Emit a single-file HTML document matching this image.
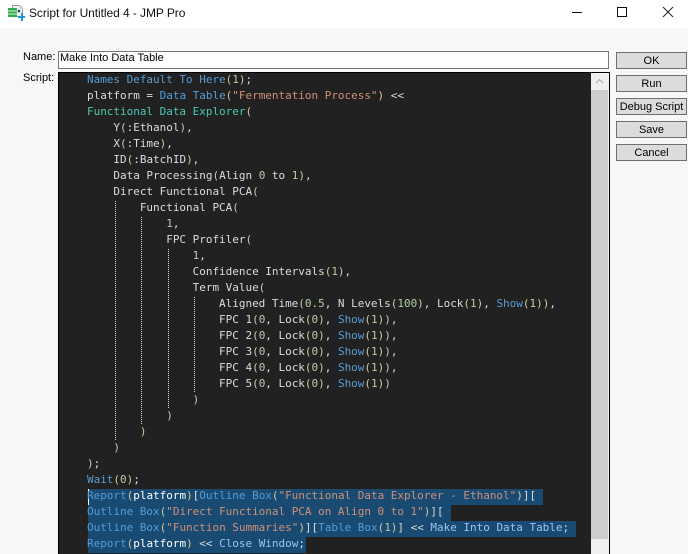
<!DOCTYPE html>
<html><head><meta charset="utf-8"><style>
html,body{margin:0;padding:0}
body{width:688px;height:554px;overflow:hidden;position:relative;background:#f7f7f7;font-family:"Liberation Sans",sans-serif;color:#000}
.a{position:absolute}
#tb{left:0;top:0;width:688px;height:28px;background:#fff}
.lbl{font-size:11px;line-height:14px}
.btn{position:absolute;left:616px;width:69px;height:15px;background:#dcdcdc;border:1px solid #707070;font-size:11px;line-height:17px;text-align:center}
#ed{left:59px;top:73px;width:532px;height:481px;background:#212121}
#sb{left:591px;top:73px;width:17px;height:466px;background:#cdcdcd}
#sbt{left:591px;top:73px;width:17px;height:17px;background:#f0f0f0}
.sel{position:absolute;background:#184a72;height:16px;left:88px}
.l{position:absolute;left:87px;font:11px/16px "DejaVu Sans Mono",monospace;letter-spacing:-0.02px;color:#dcdcdc;white-space:pre;height:16px}
.k{color:#569cd6}.f{color:#4ec9b0}.s{color:#ce9178}.n{color:#b5cea8}.b{color:#d4c89a}.w{color:#dcdcdc}
.g{position:absolute;width:0;border-left:1px dotted #d8d8d8}
</style></head><body>
<div class="a" id="tb"></div>
<svg class="a" style="left:8px;top:5px" width="17" height="17" viewBox="0 0 17 17"><path d="M4.500 .5h7l3 3v8h-10z" fill="#eef2f5" stroke="#8fa6b8"/><rect x="0" y="3" width="9" height="9" fill="#2fa84f"/><path d="M0 6h9M0 9h9" stroke="#d8f0dc"/><circle cx="11" cy="6" r="1.300" fill="#234"/><path d="M14 8v8M10 12h8" stroke="#1f94d2" stroke-width="2"/></svg>
<div class="a" style="left:29px;top:5px;font-size:12px;line-height:16px;white-space:pre;color:#111;letter-spacing:-0.07px">Script for Untitled 4 - JMP Pro</div>
<svg class="a" style="left:560px;top:0" width="128" height="28"><path d="M12 12.500h10" stroke="#111" fill="none"/><rect x="57.500" y="7.500" width="9" height="9" fill="none" stroke="#111"/><path d="M103 7l10 10M113 7l-10 10" stroke="#222" fill="none"/></svg>

<div class="a lbl" style="left:23px;top:50px">Name:</div>
<div class="a lbl" style="left:23px;top:71px">Script:</div>
<div class="a" style="left:58px;top:51px;height:16px;background:#fff;border:1px solid #777;font-size:11px;line-height:13px;padding-left:1px;width:548px">Make Into Data Table</div>

<div class="a" style="left:58px;top:72px;width:552px;height:482px;background:#f0f0f0;border:1px solid #000;border-bottom:0;box-sizing:border-box"></div>
<div class="a" id="ed"></div>
<div class="a" id="sb"></div>
<div class="a" id="sbt"></div>
<svg class="a" style="left:591px;top:73px" width="17" height="17"><path d="M5 10l3.500-3.500L12 10" fill="none" stroke="#b4b4b4" stroke-width="1.300"/></svg>

<div class="btn" style="top:52px">OK</div>
<div class="btn" style="top:75px">Run</div>
<div class="btn" style="top:98px">Debug Script</div>
<div class="btn" style="top:121px">Save</div>
<div class="btn" style="top:144px">Cancel</div>

<div class="sel" style="top:489px;width:455px"></div>
<div class="sel" style="top:505px;width:363px"></div>
<div class="sel" style="top:521px;width:488px"></div>
<div class="sel" style="top:537px;width:218px"></div>
<div class="a" style="left:88px;top:489px;width:1px;height:16px;background:#fff"></div>

<div class="g" style="left:115px;top:201px;height:239px"></div>
<div class="g" style="left:141px;top:217px;height:207px"></div>
<div class="g" style="left:168px;top:249px;height:159px"></div>
<div class="g" style="left:194px;top:297px;height:95px"></div>

<div class="l" style="top:72px"><span class="k">Names Default To Here</span><span class="b">(</span><span class="n">1</span><span class="b">)</span>;</div>
<div class="l" style="top:88px">platform = <span class="k">Data Table</span><span class="b">(</span><span class="s">"Fermentation Process"</span><span class="b">)</span> &lt;&lt;</div>
<div class="l" style="top:104px"><span class="f">Functional Data Explorer</span><span class="b">(</span></div>
<div class="l" style="top:120px">    Y<span class="b">(</span>:Ethanol<span class="b">)</span>,</div>
<div class="l" style="top:136px">    X<span class="b">(</span>:Time<span class="b">)</span>,</div>
<div class="l" style="top:152px">    ID<span class="b">(</span>:BatchID<span class="b">)</span>,</div>
<div class="l" style="top:168px">    Data Processing<span class="b">(</span>Align <span class="n">0</span> to <span class="n">1</span><span class="b">)</span>,</div>
<div class="l" style="top:184px">    Direct Functional PCA<span class="b">(</span></div>
<div class="l" style="top:200px">        Functional PCA<span class="b">(</span></div>
<div class="l" style="top:216px">            <span class="n">1</span>,</div>
<div class="l" style="top:232px">            FPC Profiler<span class="b">(</span></div>
<div class="l" style="top:248px">                <span class="n">1</span>,</div>
<div class="l" style="top:264px">                Confidence Intervals<span class="b">(</span><span class="n">1</span><span class="b">)</span>,</div>
<div class="l" style="top:280px">                Term Value<span class="b">(</span></div>
<div class="l" style="top:296px">                    Aligned Time<span class="b">(</span><span class="n">0.5</span>, N Levels<span class="b">(</span><span class="n">100</span><span class="b">)</span>, Lock<span class="b">(</span><span class="n">1</span><span class="b">)</span>, <span class="k">Show</span><span class="b">(</span><span class="n">1</span><span class="b">))</span>,</div>
<div class="l" style="top:312px">                    FPC 1<span class="b">(</span><span class="n">0</span>, Lock<span class="b">(</span><span class="n">0</span><span class="b">)</span>, <span class="k">Show</span><span class="b">(</span><span class="n">1</span><span class="b">))</span>,</div>
<div class="l" style="top:328px">                    FPC 2<span class="b">(</span><span class="n">0</span>, Lock<span class="b">(</span><span class="n">0</span><span class="b">)</span>, <span class="k">Show</span><span class="b">(</span><span class="n">1</span><span class="b">))</span>,</div>
<div class="l" style="top:344px">                    FPC 3<span class="b">(</span><span class="n">0</span>, Lock<span class="b">(</span><span class="n">0</span><span class="b">)</span>, <span class="k">Show</span><span class="b">(</span><span class="n">1</span><span class="b">))</span>,</div>
<div class="l" style="top:360px">                    FPC 4<span class="b">(</span><span class="n">0</span>, Lock<span class="b">(</span><span class="n">0</span><span class="b">)</span>, <span class="k">Show</span><span class="b">(</span><span class="n">1</span><span class="b">))</span>,</div>
<div class="l" style="top:376px">                    FPC 5<span class="b">(</span><span class="n">0</span>, Lock<span class="b">(</span><span class="n">0</span><span class="b">)</span>, <span class="k">Show</span><span class="b">(</span><span class="n">1</span><span class="b">))</span></div>
<div class="l" style="top:392px">                <span class="b">)</span></div>
<div class="l" style="top:408px">            <span class="b">)</span></div>
<div class="l" style="top:424px">        <span class="b">)</span></div>
<div class="l" style="top:440px">    <span class="b">)</span></div>
<div class="l" style="top:456px"><span class="b">)</span>;</div>
<div class="l" style="top:472px"><span class="k">Wait</span><span class="b">(</span><span class="n">0</span><span class="b">)</span>;</div>
<div class="l" style="top:488px"><span class="k">Report</span><span class="b">(</span><span style="color:#fff">platform</span><span class="b">)</span>[<span class="k">Outline Box</span><span class="b">(</span><span class="s">"Functional Data Explorer - Ethanol"</span><span class="b">)</span>][</div>
<div class="l" style="top:504px"><span class="k">Outline Box</span><span class="b">(</span><span class="s">"Direct Functional PCA on Align 0 to 1"</span><span class="b">)</span>][</div>
<div class="l" style="top:520px"><span class="k">Outline Box</span><span class="b">(</span><span class="s">"Function Summaries"</span><span class="b">)</span>][<span class="k">Table Box</span><span class="b">(</span><span class="n">1</span><span class="b">)</span>] &lt;&lt; <span style="color:#9cc4ee">Make Into Data Table</span>;</div>
<div class="l" style="top:536px"><span class="k">Report</span><span class="b">(</span><span style="color:#fff">platform</span><span class="b">)</span> &lt;&lt; <span style="color:#9cc4ee">Close Window</span>;</div>
</body></html>
